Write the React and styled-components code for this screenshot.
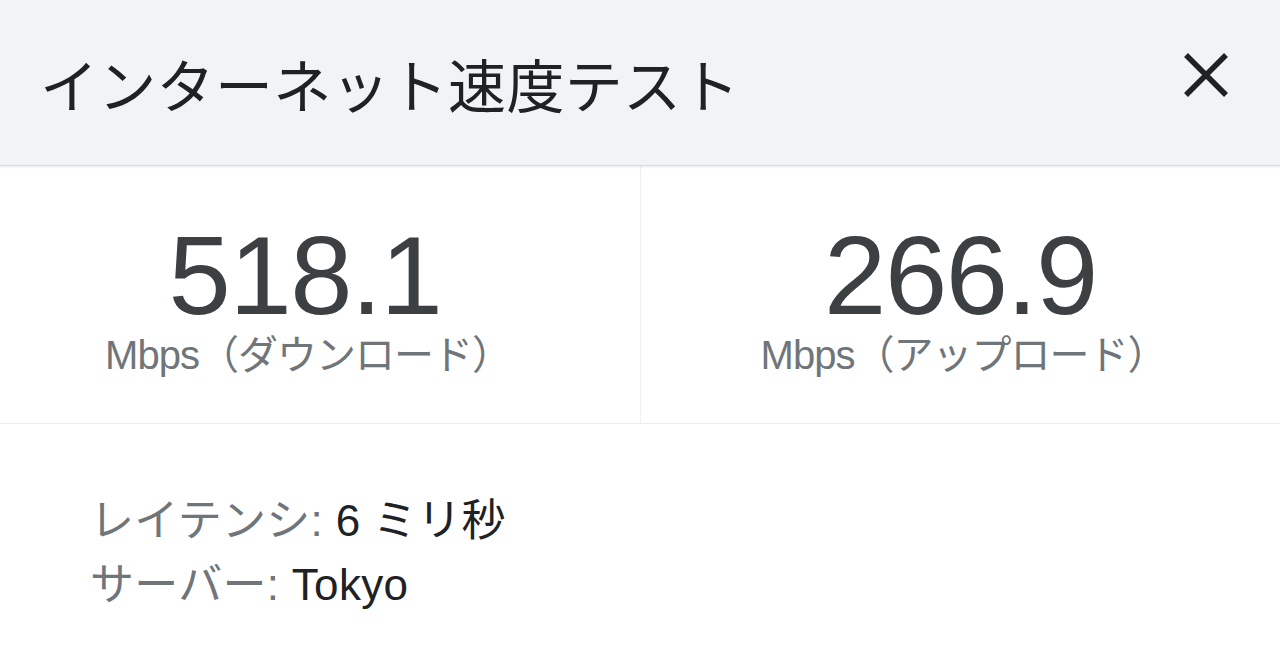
import React from 'react'
import styled, { createGlobalStyle } from 'styled-components'

const GlobalStyle = createGlobalStyle`
   body{
      margin: 0;
      background: #fff;
      font-family: "Liberation Sans", "Noto Sans CJK JP", sans-serif;
   }
`

const Header = styled.header`
   height: 165px;
   background: #f1f3f4;
   border-bottom: 1px solid #dadce0;
   box-shadow: 0 1px 2px rgba(60, 64, 67, 0.12);
   display: flex;
   align-items: center;
   justify-content: space-between;
   padding: 0 49px 0 40px;
   position: relative;
`

const Title = styled.h1`
   margin: 0;
   font-family: "Noto Sans CJK JP", sans-serif;
   font-weight: 400;
   font-size: 58px;
   line-height: 1;
   color: #202124;
   letter-spacing: 0.3px;
`

const CloseButton = styled.button`
   border: none;
   background: none;
   padding: 0;
   width: 50px;
   height: 50px;
   margin-top: -16px;
   display: flex;
   align-items: center;
   justify-content: center;
   cursor: pointer;
`

const Stats = styled.section`
   display: grid;
   grid-template-columns: 1fr 1fr;
   border-bottom: 1px solid #ececec;
`

const Stat = styled.div`
   display: flex;
   flex-direction: column;
   align-items: center;
   padding: 55px ${p => p.$shift}px 44px 0;
   border-left: ${p => (p.$divided ? '1px solid #efefef' : 'none')};
`

const Value = styled.div`
   font-family: "Liberation Sans", sans-serif;
   font-size: 112px;
   line-height: 110px;
   color: #3c4043;
   letter-spacing: -1.5px;
`

const Unit = styled.div`
   font-size: 40px;
   line-height: 48px;
   color: #70757a;
   letter-spacing: -1px;
   padding-left: 6px;
`

const Info = styled.section`
   padding: 65px 0 0 90px;
`

const InfoRow = styled.div`
   font-size: 44px;
   line-height: 64px;
   color: #70757a;
   letter-spacing: 0.3px;

   span{
      color: #202124;
   }
`

const stats = [
   { value: '518.1', unit: 'Mbps（ダウンロード）', shift: 30 },
   { value: '266.9', unit: 'Mbps（アップロード）', shift: 0 },
]

const App = () => {
   return (
      <>
         <GlobalStyle />
         <Header>
            <Title>インターネット速度テスト</Title>
            <CloseButton aria-label="閉じる">
               <svg width="48" height="48" viewBox="0 0 48 48">
                  <path d="M4 4 L44 44 M44 4 L4 44" stroke="#202124" strokeWidth="5.5" fill="none" />
               </svg>
            </CloseButton>
         </Header>
         <Stats>
            {stats.map((s, i) => (
               <Stat key={s.value} $divided={i > 0} $shift={s.shift}>
                  <Value>{s.value}</Value>
                  <Unit>{s.unit}</Unit>
               </Stat>
            ))}
         </Stats>
         <Info>
            <InfoRow>レイテンシ: <span>6 ミリ秒</span></InfoRow>
            <InfoRow>サーバー: <span>Tokyo</span></InfoRow>
         </Info>
      </>
   )
}

export default App
